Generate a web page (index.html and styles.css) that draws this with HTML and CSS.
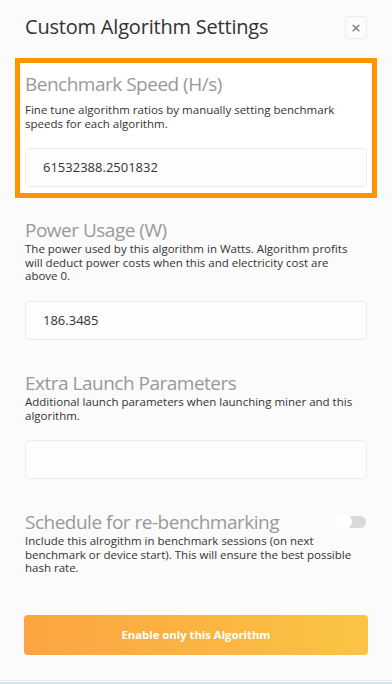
FILE: index.html
```html
<!DOCTYPE html>
<html>
<head>
<meta charset="utf-8">
<link rel="stylesheet" href="styles.css">
</head>
<body>
<div class="modal">
  <div class="header">
    <h1 class="title">Custom Algorithm Settings</h1>
    <button class="close" type="button">&#215;</button>
  </div>
  <div class="section highlight">
    <h2 class="heading">Benchmark Speed (H/s)</h2>
    <p class="desc desc-spaced">Fine tune algorithm ratios by manually setting benchmark speeds for each algorithm.</p>
    <div class="input">61532388.2501832</div>
  </div>
  <div class="section">
    <h2 class="heading">Power Usage (W)</h2>
    <p class="desc">The power used by this algorithm in Watts. Algorithm profits will deduct power costs when this and electricity cost are above 0.</p>
    <div class="input">186.3485</div>
  </div>
  <div class="section">
    <h2 class="heading">Extra Launch Parameters</h2>
    <p class="desc">Additional launch parameters when launching miner and this algorithm.</p>
    <div class="input"></div>
  </div>
  <div class="section last">
    <div class="heading-row">
      <h2 class="heading">Schedule for re-benchmarking</h2>
      <span class="toggle"><span class="knob"></span></span>
    </div>
    <p class="desc">Include this alrogithm in benchmark sessions (on next benchmark or device start). This will ensure the best possible hash rate.</p>
  </div>
  <div class="actions">
    <button class="primary" type="button">Enable only this Algorithm</button>
  </div>
  <div class="footer"></div>
</div>
</body>
</html>
```
FILE: styles.css
```css
html, body {
  margin: 0;
  padding: 0;
  background: #fbfbfb;
}
body {
  font-family: "Open Sans", "Noto Sans", sans-serif;
  color: #333;
  height: 684px;
  overflow: hidden;
}
.modal {
  display: flex;
  flex-direction: column;
  height: 684px;
}
.modal > * {
  flex-shrink: 0;
}
.header {
  display: flex;
  justify-content: space-between;
  align-items: flex-start;
  padding: 15px 25px 0 25px;
  height: 43px;
  box-sizing: border-box;
}
.title {
  margin: 0;
  font-size: 20px;
  line-height: 24px;
  font-weight: 400;
  color: #333;
  letter-spacing: -0.2px;
}
.close {
  margin: 1px 0 0 0;
  width: 22px;
  height: 23px;
  padding: 0;
  border: 1px solid #ececec;
  border-radius: 3px;
  background: #fcfcfc;
  color: #8a8a8a;
  font-size: 13px;
  font-weight: 700;
  line-height: 20px;
  font-family: "DejaVu Sans", sans-serif;
}
.section {
  margin: 6px 15px 0 15px;
  border: 5px solid transparent;
  padding: 9px 5px 6px 5px;
}
.section.highlight {
  margin-top: 15px;
  border-color: #ff9600;
  background: #fff;
}
.heading-row {
  display: flex;
  justify-content: space-between;
  align-items: center;
}
.heading {
  margin: 0;
  font-size: 19px;
  line-height: 24px;
  font-weight: 400;
  color: #999;
  letter-spacing: -0.5px;
}
.desc {
  margin: 0;
  padding-right: 7px;
  font-size: 11.5px;
  line-height: 13.6px;
  color: #333;
}
.desc-spaced {
  margin-top: 7px;
}
.input {
  margin-top: 18px;
  height: 39px;
  box-sizing: border-box;
  border: 1px solid #ececec;
  border-radius: 4px;
  background: #fdfdfd;
  padding: 0 17px;
  font-size: 13px;
  line-height: 37px;
  color: #333;
}
.toggle {
  position: relative;
  width: 30px;
  height: 12px;
  border-radius: 6px;
  background: #d9d9d9;
  margin-right: 1px;
}
.knob {
  position: absolute;
  left: -1px;
  top: -3px;
  width: 17px;
  height: 17px;
  border-radius: 50%;
  background: #fff;
  box-shadow: 0 0 1px rgba(0,0,0,0.05);
}
.actions {
  padding: 29px 24px 0 24px;
}
.primary {
  display: block;
  width: 100%;
  height: 40px;
  border: 0;
  border-radius: 4px;
  background: linear-gradient(90deg, #fba441 0%, #fbc443 100%);
  color: #fff;
  font-family: "Open Sans", sans-serif;
  font-weight: 700;
  font-size: 11.3px;
}
.footer {
  margin-top: auto;
  height: 4px;
  border-top: 1px solid #e8e8e8;
  border-bottom: 2px solid #cfe8ef;
  box-sizing: border-box;
}
```
